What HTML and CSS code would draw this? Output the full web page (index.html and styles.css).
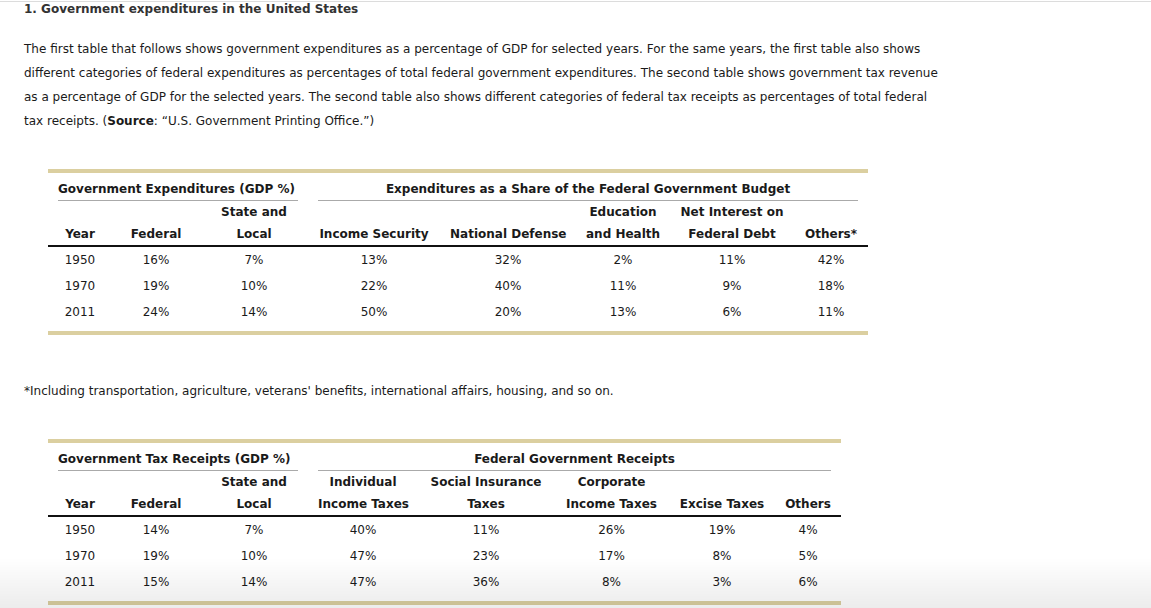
FILE: index.html
```html
<!DOCTYPE html>
<html lang="en">
<head>
<meta charset="utf-8">
<title>Government expenditures in the United States</title>
<link rel="stylesheet" href="styles.css">
</head>
<body>
<div class="topline"></div>
<main class="page">
  <h1 class="title">1. Government expenditures in the United States</h1>
  <p class="intro">The first table that follows shows government expenditures as a percentage of GDP for selected years. For the same years, the first table also shows different categories of federal expenditures as percentages of total federal government expenditures. The second table shows government tax revenue as a percentage of GDP for the selected years. The second table also shows different categories of federal tax receipts as percentages of total federal tax receipts. (<strong>Source</strong>: “U.S. Government Printing Office.”)</p>

  <div class="tablewrap t1">
    <table class="data">
      <colgroup>
        <col class="w64"><col class="w88"><col class="w108"><col class="w132"><col class="w136"><col class="w94"><col class="w124"><col class="w74">
      </colgroup>
      <thead>
        <tr class="group">
          <th colspan="3" class="left"><div class="rule">Government Expenditures (GDP %)</div></th>
          <th colspan="5"><div class="rule">Expenditures as a Share of the Federal Government Budget</div></th>
        </tr>
        <tr class="cols">
          <th>Year</th>
          <th>Federal</th>
          <th>State and<br>Local</th>
          <th>Income Security</th>
          <th>National Defense</th>
          <th>Education<br>and Health</th>
          <th>Net Interest on<br>Federal Debt</th>
          <th>Others*</th>
        </tr>
      </thead>
      <tbody>
        <tr><td>1950</td><td>16%</td><td>7%</td><td>13%</td><td>32%</td><td>2%</td><td>11%</td><td>42%</td></tr>
        <tr><td>1970</td><td>19%</td><td>10%</td><td>22%</td><td>40%</td><td>11%</td><td>9%</td><td>18%</td></tr>
        <tr><td>2011</td><td>24%</td><td>14%</td><td>50%</td><td>20%</td><td>13%</td><td>6%</td><td>11%</td></tr>
      </tbody>
    </table>
  </div>

  <p class="note">*Including transportation, agriculture, veterans' benefits, international affairs, housing, and so on.</p>

  <div class="tablewrap t2">
    <table class="data">
      <colgroup>
        <col class="w64"><col class="w88"><col class="w108"><col class="w110"><col class="w136"><col class="w115"><col class="w106"><col class="w66">
      </colgroup>
      <thead>
        <tr class="group">
          <th colspan="3" class="left"><div class="rule">Government Tax Receipts (GDP %)</div></th>
          <th colspan="5"><div class="rule">Federal Government Receipts</div></th>
        </tr>
        <tr class="cols">
          <th>Year</th>
          <th>Federal</th>
          <th>State and<br>Local</th>
          <th>Individual<br>Income Taxes</th>
          <th>Social Insurance<br>Taxes</th>
          <th>Corporate<br>Income Taxes</th>
          <th>Excise Taxes</th>
          <th>Others</th>
        </tr>
      </thead>
      <tbody>
        <tr><td>1950</td><td>14%</td><td>7%</td><td>40%</td><td>11%</td><td>26%</td><td>19%</td><td>4%</td></tr>
        <tr><td>1970</td><td>19%</td><td>10%</td><td>47%</td><td>23%</td><td>17%</td><td>8%</td><td>5%</td></tr>
        <tr><td>2011</td><td>15%</td><td>14%</td><td>47%</td><td>36%</td><td>8%</td><td>3%</td><td>6%</td></tr>
      </tbody>
    </table>
  </div>
</main>
<div class="fade"></div>
</body>
</html>
```
FILE: styles.css
```css
html, body {
  margin: 0;
  padding: 0;
  background: #fff;
}
body {
  font-family: "DejaVu Sans", Verdana, sans-serif;
  font-size: 12px;
  color: #1a1a1a;
}
.topline {
  height: 1px;
  margin-top: 1px;
  background: #dcdcdc;
}
.page {
  padding: 0 24px;
}
.title {
  margin: 0;
  padding-top: 0;
  font-size: 12px;
  line-height: 14px;
  font-weight: bold;
  color: #333;
}
.intro {
  margin: 21px 0 0;
  line-height: 24px;
  max-width: 918px;
}
.intro strong {
  font-weight: bold;
}
.tablewrap {
  margin-left: 24px;
  border-top: 4px solid #dbcfa0;
  border-bottom: 4px solid #dbcfa0;
  padding-top: 1px;
  padding-bottom: 6px;
}
.tablewrap.t1 {
  width: 820px;
  margin-top: 36px;
}
.tablewrap.t2 {
  width: 793px;
  margin-top: 0;
}
.data {
  width: 100%;
  table-layout: fixed;
  border-collapse: collapse;
}
.w64 { width: 64px; }
.w66 { width: 66px; }
.w74 { width: 74px; }
.w88 { width: 88px; }
.w94 { width: 94px; }
.w106 { width: 106px; }
.w108 { width: 108px; }
.w110 { width: 110px; }
.w115 { width: 115px; }
.w124 { width: 124px; }
.w132 { width: 132px; }
.w136 { width: 136px; }
.data th {
  font-weight: bold;
  text-align: center;
  white-space: nowrap;
  padding: 0 10px;
  line-height: 22px;
  vertical-align: bottom;
  color: #1a1a1a;
}
.data .group th {
  padding-top: 4px;
}
.data .group th.left {
  text-align: left;
}
.data .rule {
  border-bottom: 1px solid #aaa;
}
.data .cols th {
  border-bottom: 2px solid #111;
}
.data td {
  text-align: center;
  padding: 0 10px;
  line-height: 26px;
  white-space: nowrap;
}
.note {
  margin: 44px 0 0;
  line-height: 24px;
  padding-bottom: 36px;
}
.fade {
  position: fixed;
  left: 0;
  right: 0;
  bottom: 0;
  height: 50px;
  background: linear-gradient(rgba(0,0,0,0), rgba(0,0,0,0.075));
  pointer-events: none;
}
```
